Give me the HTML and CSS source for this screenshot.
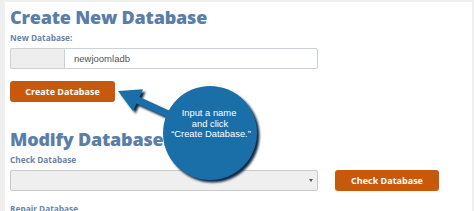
FILE: index.html
```html
<!DOCTYPE html>
<html lang="en">
<head>
    <meta charset="UTF-8">
    <meta name="viewport" content="width=device-width, initial-scale=1.0">
    <title>Databases</title>
    <link rel="stylesheet" href="styles.css">
</head>
<body>
    <div class="panel">
        <h1>Create New Database</h1>
        <label class="field-label">New Database:</label>
        <div class="input-group">
            <span class="addon"></span>
            <input class="text-input" type="text" value="newjoomladb">
        </div>
        <button class="btn">Create Database</button>

        <h2>Modify Databases</h2>
        <label class="field-label">Check Database</label>
        <div class="select-row">
            <div class="select-box"><span class="caret"></span></div>
            <button class="btn btn-check">Check Database</button>
        </div>
        <label class="field-label repair">Repair Database</label>
    </div>

    <svg class="callout" width="474" height="211" viewBox="0 0 474 211">
        <defs>
            <filter id="soft" x="-20%" y="-20%" width="140%" height="140%">
                <feGaussianBlur stdDeviation="0.8"/>
            </filter>
        </defs>
        <g fill="#0f2b43" transform="translate(2.5 2.5)" filter="url(#soft)">
            <polygon points="118,91 143,89.2 139.5,97 183.3,116.9 180.3,123.3 136.5,103.4 133,111.1"/>
            <circle cx="210" cy="133" r="47"/>
        </g>
        <g fill="#1a6fa8">
            <polygon points="118,91 143,89.2 139.5,97 183.3,116.9 180.3,123.3 136.5,103.4 133,111.1"/>
            <circle cx="210" cy="133" r="47"/>
        </g>
        <g class="callout-text" text-anchor="middle">
            <text x="209" y="116">Input a name</text>
            <text x="210" y="126.5">and click</text>
            <text x="211" y="137">“Create Database.”</text>
        </g>
    </svg>
</body>
</html>
```

FILE: styles.css
```css
body {
    margin: 0;
    background: #efefef;
    font-family: "Open Sans", Arial, sans-serif;
    overflow: hidden;
}
.panel {
    margin: 2px 0 0 5px;
    width: 467px;
    height: 209px;
    overflow: hidden;
    background: #fff;
    padding: 0 5px;
    box-sizing: border-box;
}
h1, h2 {
    margin: 0;
    font-size: 18px;
    line-height: 22px;
    font-weight: 800;
    color: #5a7ea7;
    letter-spacing: -0.2px;
}
h1 {
    padding-top: 4px;
}
h2 {
    margin-top: 26px;
}
.field-label {
    display: block;
    margin-top: 5px;
    font-size: 8.3px;
    line-height: 10px;
    font-weight: 700;
    color: #6886a7;
}
.input-group {
    display: flex;
    margin-top: 5px;
    width: 308px;
    height: 21px;
}
.addon {
    width: 54px;
    background: #eee;
    border: 1px solid #d0d0d0;
    border-right: none;
    border-radius: 2px 0 0 2px;
    box-sizing: border-box;
}
.text-input {
    flex: 1;
    margin: 0;
    padding: 0 0 0 9px;
    border: 1px solid #c9d1d9;
    border-radius: 0 2px 2px 0;
    font-family: "Liberation Sans", Arial, sans-serif;
    font-size: 9.5px;
    color: #555;
    outline: none;
}
.btn {
    display: block;
    margin-top: 12px;
    width: 105px;
    height: 21px;
    padding: 0;
    border: none;
    border-radius: 3px;
    background: #c8590b;
    color: #fff;
    font-family: "Open Sans", Arial, sans-serif;
    font-size: 9px;
    font-weight: 700;
}
.select-row {
    display: flex;
    gap: 17px;
    margin-top: 5px;
}
.select-box {
    position: relative;
    width: 308px;
    height: 21px;
    background: #efefef;
    border: 1px solid #c8c8c8;
    border-radius: 2px;
    box-sizing: border-box;
}
.caret {
    position: absolute;
    right: 4px;
    top: 8px;
    border-left: 2px solid transparent;
    border-right: 2px solid transparent;
    border-top: 3px solid #555;
}
.btn-check {
    margin-top: 0;
    width: 104px;
}
.repair {
    margin-top: 13px;
}
.callout {
    position: absolute;
    top: 0;
    left: 0;
}
.callout-text {
    font-family: "Liberation Sans", Arial, sans-serif;
    font-size: 9.4px;
    fill: #fff;
}
```
